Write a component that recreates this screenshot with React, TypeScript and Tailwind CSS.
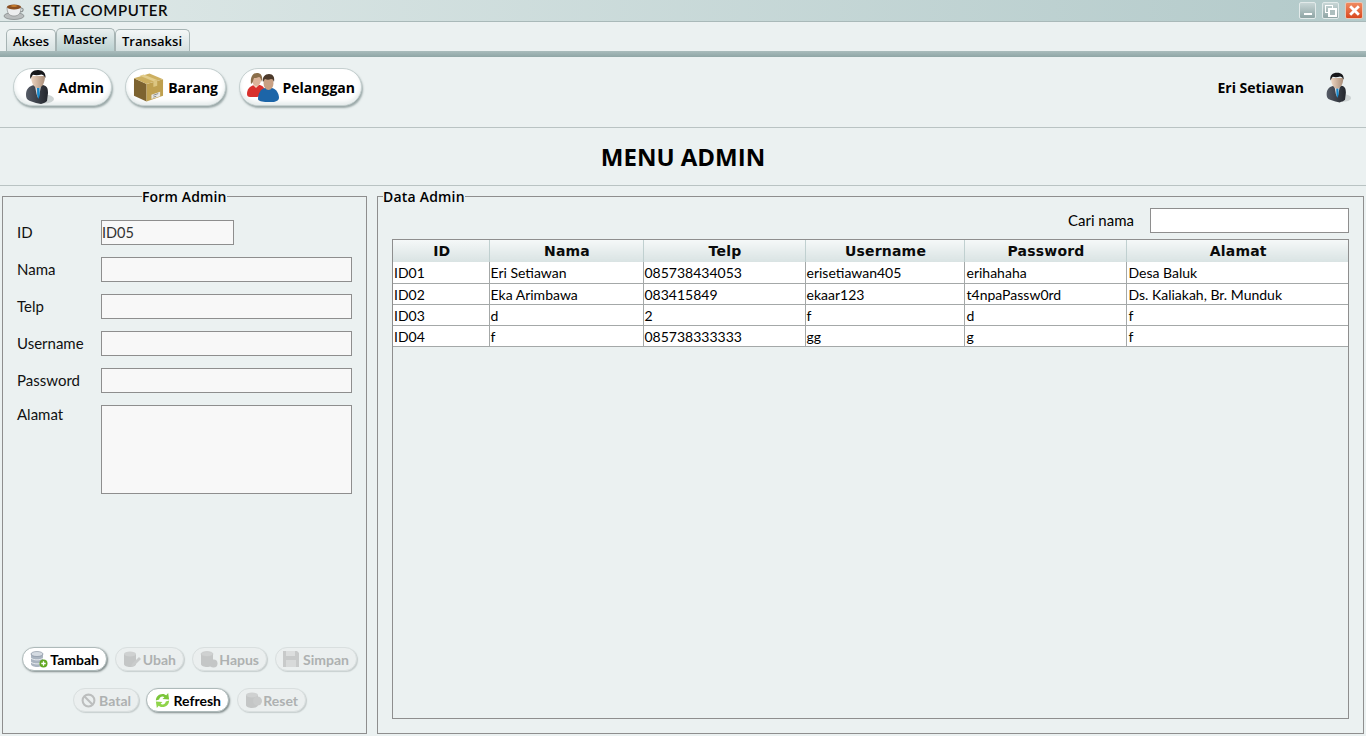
import React from "react";

const UserIcon = ({ className }: { className: string }) => (
  <svg viewBox="0 0 32 36" className={className}>
    <defs>
      <linearGradient id="suit" x1="0" y1="0" x2="1" y2="0">
        <stop offset="0" stopColor="#555b66" />
        <stop offset="1" stopColor="#23262c" />
      </linearGradient>
      <linearGradient id="face" x1="0" y1="0" x2="1" y2="0">
        <stop offset="0" stopColor="#eed6c2" />
        <stop offset="1" stopColor="#a98d78" />
      </linearGradient>
    </defs>
    <ellipse cx="21" cy="30" rx="10" ry="4.500" fill="#cdd3d3" />
    <path d="M3 26c0-6 3-9 8-10l4 1 5-1c4 1 5 3 5 8l-1 8c-2 2-4 2-6 3l-5-1-6-2c-3-1-4-3-4-6z" fill="url(#suit)" />
    <path d="M12 17l3 2 3-2-1.500 8-1.500 4-1.500-4z" fill="#d9dade" />
    <path d="M14 19h2.400l.4 7-1.400 4-1.200-4z" fill="#1587c9" />
    <path d="M8 7c0 7 3 12 7 12s7-5 7-12z" fill="url(#face)" />
    <path d="M7.500 10C6 4 10 1 15 1s8 3 7.500 8c-1-2-2-3-4-3.500-3 .8-6 .8-8.500.3-1 1-1.500 2.200-2.500 4.200z" fill="#17181b" />
  </svg>
);

const BoxIcon = () => (
  <svg viewBox="0 0 32 32" className="w-[31px] h-[32px]">
    <path d="M1 7l13 6v18L1 25z" fill="#7d6330" />
    <path d="M14 13l17-5v17l-17 6z" fill="#bfa04f" />
    <path d="M1 7l16-5 14 6-17 5z" fill="#cdb061" />
    <path d="M7 4.500l14 5.500 4-1.200L11 3.200z" fill="#e2cd8c" />
    <path d="M21 10l4-1.200v6l-4 1.200z" fill="#dcc681" />
    <path d="M19 24l9-3v4.500l-9 3z" fill="#e8e8e4" />
    <path d="M21 24.500l5-1.700M21 26.500l3-1" stroke="#8a8a86" />
  </svg>
);

const PeopleIcon = () => (
  <svg viewBox="0 0 32 30" className="w-[32px] h-[30px]">
    <path d="M0 22c0-5 3-8 7-9h6c3 1 5 3 5 7l-4 4-4 1H3c-2 0-3-1-3-3z" fill="#d8302c" />
    <path d="M6 13l3 3 3-3z" fill="#f2d2bd" />
    <ellipse cx="9.500" cy="8" rx="4.500" ry="6" fill="#dcb49a" />
    <path d="M4 12C3 5 6 1 10 1s6 3 5 9c-1-3-2-5-3-5-2 1-4 1-5 1-1 2-1 5-3 6z" fill="#8b6e4a" />
    <path d="M11 27c0-6 3-10 7-11h7c4 1 7 5 7 10 0 2-2 3-5 4l-7 0c-5 0-9-1-9-3z" fill="#1c65a8" />
    <ellipse cx="21.500" cy="11" rx="5" ry="7" fill="#c9a083" />
    <path d="M16 10c-1-5 2-8 6-8s6 3 5 8c-1-2-1-3-3-3-2 1-4 1-6 0-1 1-1 2-2 3z" fill="#4c3a2b" />
  </svg>
);

const CupIcon = () => (
  <svg viewBox="0 0 22 18" className="w-[22px] h-[18px]">
    <ellipse cx="11" cy="14" rx="10" ry="3.500" fill="#b9bdbd" stroke="#7d8282" strokeWidth="0.700" />
    <path d="M4 5c0 6 2 9 7 9s7-3 7-9z" fill="#eceeee" stroke="#7d8282" strokeWidth="0.600" />
    <ellipse cx="11" cy="5" rx="7" ry="2.500" fill="#8a4f20" />
    <path d="M7 4c2-1 6-1 8 0-2 1-6 1-8 0z" fill="#d98a30" />
    <path d="M18 6c3 0 3 4-1 4" fill="none" stroke="#8f9494" strokeWidth="1.200" />
  </svg>
);

const DbIcon = ({ disabled, badge }: { disabled?: boolean; badge?: boolean }) => (
  <svg viewBox="0 0 18 17" className="w-[18px] h-[17px]">
    <path d="M1 3v10c0 2 3 3 6 3s6-1 6-3V3z" fill={disabled ? "#c4c6c6" : "#aab4c0"} />
    <ellipse cx="7" cy="3" rx="6" ry="2.500" fill={disabled ? "#cfd1d1" : "#d5dbe2"} stroke={disabled ? "#c4c6c6" : "#7e8a98"} strokeWidth="0.600" />
    {!disabled && <path d="M1 7c2 2.500 10 2.500 12 0M1 11c2 2.500 10 2.500 12 0" fill="none" stroke="#eef1f4" strokeWidth="0.900" />}
    <circle cx="13.500" cy="12.500" r="4" fill={disabled ? "#c4c6c6" : "#62a820"} />
    {badge && <path d="M13.500 10.300v4.400M11.300 12.500h4.400" stroke="#fff" strokeWidth="1.300" />}
  </svg>
);

const EditIcon = () => (
  <svg viewBox="0 0 18 17" className="w-[18px] h-[17px]">
    <path d="M1 3v10c0 2 3 3 6 3s6-1 6-3V3z" fill="#c4c6c6" />
    <ellipse cx="7" cy="3" rx="6" ry="2.500" fill="#cfd1d1" />
    <path d="M9 13l7-7 2 2-7 7-3 1z" fill="#c9cbcb" />
  </svg>
);

const SaveIcon = () => (
  <svg viewBox="0 0 16 16" className="w-[16px] h-[16px]">
    <path d="M0 0h14l2 2v14H0z" fill="#c8caca" />
    <path d="M3 0h9v5H3z" fill="#dcdede" />
    <path d="M3 9h10v7H3z" fill="#d8dada" />
  </svg>
);

const BanIcon = () => (
  <svg viewBox="0 0 16 16" className="w-[15px] h-[15px]">
    <circle cx="8" cy="8" r="6.300" fill="none" stroke="#bcbebe" strokeWidth="2.200" />
    <path d="M3.500 3.500l9 9" stroke="#bcbebe" strokeWidth="2.200" />
  </svg>
);

const RefreshIcon = () => (
  <svg viewBox="0 0 18 18" className="w-[17px] h-[17px]">
    <path d="M2 9c0-4 3-7 7-7 2 0 3 .7 4 1.500L15 1l1 7-7-.5 2-2c-2-1.500-5-.5-5.500 2.500z" fill="#7cc63a" />
    <path d="M16 9c0 4-3 7-7 7-2 0-3-.7-4-1.500L3 17l-1-7 7 .5-2 2c2 1.500 5 .5 5.500-2.500z" fill="#8fd44a" />
  </svg>
);

const ResetIcon = () => (
  <svg viewBox="0 0 18 17" className="w-[18px] h-[17px]">
    <path d="M1 3v10c0 2 3 3 6 3s6-1 6-3V3z" fill="#c4c6c6" />
    <ellipse cx="7" cy="3" rx="6" ry="2.500" fill="#cfd1d1" />
    <circle cx="12.500" cy="9" r="4.500" fill="#c9cbcb" />
  </svg>
);

const ToolBtn = ({ icon, label, w, pad }: { icon: React.ReactNode; label: string; w: string; pad: string }) => (
  <button className={`${w} h-[38px] rounded-full bg-white border border-[#c5d0d0] shadow-[1px_2px_2px_rgba(90,110,110,0.55),inset_0_-3px_4px_#e6ecec] flex items-center justify-between ${pad} font-['Open_Sans',sans-serif] font-bold text-[14px] text-black`}>
    {icon}
    <span>{label}</span>
  </button>
);

const SmallBtn = ({ icon, label, w, off }: { icon: React.ReactNode; label: string; w: string; off?: boolean }) => (
  <button className={`${w} h-[24px] rounded-full border flex items-center justify-between pl-[7px] pr-[7px] font-['Lato',sans-serif] font-bold text-[14px] ${off ? "bg-[#ebefef] border-[#d9dfdf] text-[#aeb1b1] shadow-[1px_1px_1px_rgba(120,130,130,0.3)]" : "bg-white border-[#aebaba] text-black shadow-[1px_1px_2px_rgba(70,85,85,0.65)]"}`}>
    {icon}
    <span>{label}</span>
  </button>
);

const Field = ({ label, value, w = "w-[251px]", h = "h-[25px]", top = "items-center" }: { label: string; value?: string; w?: string; h?: string; top?: string }) => (
  <div className={`flex ${top}`}>
    <span className={`w-[84px] text-[15px] text-[#111] ${top === "items-start" ? "leading-[18px]" : ""}`}>{label}</span>
    <div className={`${w} ${h} bg-[#f8f8f8] border border-[#8e8e8e] flex items-center text-[14.500px] text-[#333]`}>{value}</div>
  </div>
);

const cols = ["w-[96px]", "w-[154px]", "w-[162px]", "w-[159px]", "w-[162px]", "w-auto"];
const pads = ["pl-[1px]", "pl-[1px]", "pl-[1px]", "pl-[1px]", "pl-[2px]", "pl-[2px]"];
const heads = ["ID", "Nama", "Telp", "Username", "Password", "Alamat"];
const rows = [
  ["ID01", "Eri Setiawan", "085738434053", "erisetiawan405", "erihahaha", "Desa Baluk"],
  ["ID02", "Eka Arimbawa", "083415849", "ekaar123", "t4npaPassw0rd", "Ds. Kaliakah, Br. Munduk"],
  ["ID03", "d", "2", "f", "d", "f"],
  ["ID04", "f", "085738333333", "gg", "g", "f"],
];

export default function App() {
  return (
    <div className="w-[1366px] h-[736px] overflow-hidden bg-[#ebf1f1] flex flex-col font-['Lato',sans-serif] text-black">
      {/* title bar */}
      <div className="h-[22px] shrink-0 flex items-center justify-between bg-gradient-to-r from-[#dfe9e8] to-[#b3caca] border-b border-[#a9b9b9]">
        <div className="flex items-center pl-[3px]">
          <CupIcon />
          <span className="ml-[8px] text-[15px] font-semibold tracking-[0.6px] text-[#0a0a0a]">SETIA COMPUTER</span>
        </div>
        <div className="flex items-center gap-[6px] pr-[3px]">
          <div className="w-[17px] h-[17px] rounded-[2px] border border-[#e2eaea] bg-gradient-to-b from-[#c8d6d6] to-[#8fa5a5] flex items-end justify-center pb-[3px]">
            <div className="w-[8px] h-[2px] bg-white" />
          </div>
          <div className="w-[17px] h-[17px] rounded-[2px] border border-[#e2eaea] bg-gradient-to-b from-[#c8d6d6] to-[#8fa5a5] relative">
            <div className="absolute left-[2px] top-[2px] w-[8px] h-[8px] border border-white" />
            <div className="absolute left-[5px] top-[5px] w-[9px] h-[9px] border-2 border-white bg-[#aebfbf]" />
          </div>
          <div className="w-[18px] h-[17px] rounded-[2px] border border-[#e9c6b6] bg-gradient-to-b from-[#ef8a5f] to-[#d9471c] flex items-center justify-center">
            <svg viewBox="0 0 12 12" className="w-[13px] h-[13px]"><path d="M2 2l8 8M10 2l-8 8" stroke="#fff" strokeWidth="2.600" /></svg>
          </div>
        </div>
      </div>

      {/* tabs */}
      <div className="h-[29px] shrink-0 flex items-end pl-[6px] font-['Open_Sans',sans-serif] text-[13px] font-semibold">
        <div className="w-[50px] h-[22px] pt-[2px] flex items-center justify-center rounded-t-[5px] border border-b-0 border-[#a7b4b4] bg-gradient-to-b from-[#f4f7f7] to-[#d6e1e1]">Akses</div>
        <div className="w-[59px] h-[23px] pr-[1px] pb-[1px] flex items-center justify-center rounded-t-[5px] border border-b-0 border-[#a7b4b4] bg-gradient-to-b from-[#e9efef] to-[#bad0d0]">Master</div>
        <div className="w-[75px] h-[22px] pt-[2px] pr-[1px] flex items-center justify-center rounded-t-[5px] border border-b-0 border-[#a7b4b4] bg-gradient-to-b from-[#f4f7f7] to-[#d6e1e1]">Transaksi</div>
      </div>
      <div className="h-[6px] shrink-0 bg-gradient-to-b from-[#a9bcbc] to-[#8fa6a6]" />

      {/* toolbar */}
      <div className="h-[71px] shrink-0 border-b border-[#b9c3c3] flex items-center justify-between pl-[13px] pr-[14px] pb-[10px]">
        <div className="flex gap-[13px]">
          <ToolBtn w="w-[99px]" pad="pl-[9px] pr-[7px]" label="Admin" icon={<UserIcon className="w-[32px] h-[36px]" />} />
          <ToolBtn w="w-[101px]" pad="pl-[7px] pr-[7px]" label="Barang" icon={<BoxIcon />} />
          <ToolBtn w="w-[123px]" pad="pl-[7px] pr-[6px]" label="Pelanggan" icon={<PeopleIcon />} />
        </div>
        <div className="flex items-center gap-[20px] font-['Open_Sans',sans-serif] font-bold text-[14px]">
          <span>Eri Setiawan</span>
          <UserIcon className="w-[28px] h-[33px]" />
        </div>
      </div>

      {/* heading */}
      <div className="h-[58px] shrink-0 border-b border-[#b9c3c3] flex items-center justify-center font-['Open_Sans',sans-serif] font-bold text-[24px] text-black">
        MENU ADMIN
      </div>

      {/* panels */}
      <div className="flex-1 min-h-0 flex gap-[10px] pl-[2px] pr-[2px] pt-[1px] pb-[2px]">
        <fieldset className="w-[365px] border border-[#8e8e8e] flex flex-col">
          <legend className="ml-[139px] font-['Open_Sans',sans-serif] font-semibold text-[14px] leading-[19px] tracking-[0.15px]">Form Admin</legend>
          <div className="pl-[14px] pt-[14px] flex flex-col gap-[12px]">
            <Field label="ID" value="ID05" w="w-[133px]" />
            <Field label="Nama" />
            <Field label="Telp" />
            <Field label="Username" />
            <Field label="Password" />
            <Field label="Alamat" h="h-[89px]" top="items-start" />
          </div>
          <div className="mt-[153px] flex flex-col gap-[17px]">
            <div className="flex gap-[8px] pl-[19px]">
              <SmallBtn w="w-[85px]" label="Tambah" icon={<DbIcon badge />} />
              <SmallBtn w="w-[69px]" off label="Ubah" icon={<EditIcon />} />
              <SmallBtn w="w-[75px]" off label="Hapus" icon={<DbIcon disabled />} />
              <SmallBtn w="w-[82px]" off label="Simpan" icon={<SaveIcon />} />
            </div>
            <div className="flex gap-[7px] pl-[70px]">
              <SmallBtn w="w-[66px]" off label="Batal" icon={<BanIcon />} />
              <SmallBtn w="w-[83px]" label="Refresh" icon={<RefreshIcon />} />
              <div className="ml-[1px]">
                <SmallBtn w="w-[69px]" off label="Reset" icon={<ResetIcon />} />
              </div>
            </div>
          </div>
        </fieldset>

        <fieldset className="flex-1 border border-[#8e8e8e] flex flex-col">
          <legend className="ml-[5px] font-['Open_Sans',sans-serif] font-semibold text-[14px] leading-[19px] tracking-[0.2px]">Data Admin</legend>
          <div className="px-[14px]">
            <div className="flex items-center justify-end h-[25px] mt-[2px]">
              <span className="text-[15px] mr-[16px]">Cari nama</span>
              <div className="w-[199px] h-[25px] bg-white border border-[#8e8e8e]" />
            </div>
            <div className="mt-[6px] h-[480px] border border-[#8e8e8e]">
              <table className="w-full table-fixed border-collapse text-[14px]">
                <colgroup>
                  {cols.map((c, i) => <col key={i} className={c} />)}
                </colgroup>
                <thead>
                  <tr className="h-[22px]">
                    {heads.map((h) => (
                      <th key={h} className="p-0 pl-[2px] border-r last:border-r-0 border-[#c0d0d0] bg-gradient-to-b from-[#f5f8f8] to-[#d9e3e3] font-['DejaVu_Sans',sans-serif] font-bold text-[14px] tracking-[0.2px] text-[#0a0a0a]">{h}</th>
                    ))}
                  </tr>
                </thead>
                <tbody className="bg-white">
                  {rows.map((r) => (
                    <tr key={r[0]} className="h-[21px]">
                      {r.map((c, i) => (
                        <td key={i} className={`p-0 ${pads[i]} pt-[2px] leading-[18px] border-r last:border-r-0 border-b border-[#a4a8a8] whitespace-nowrap`}>{c}</td>
                      ))}
                    </tr>
                  ))}
                </tbody>
              </table>
            </div>
          </div>
        </fieldset>
      </div>
    </div>
  );
}
